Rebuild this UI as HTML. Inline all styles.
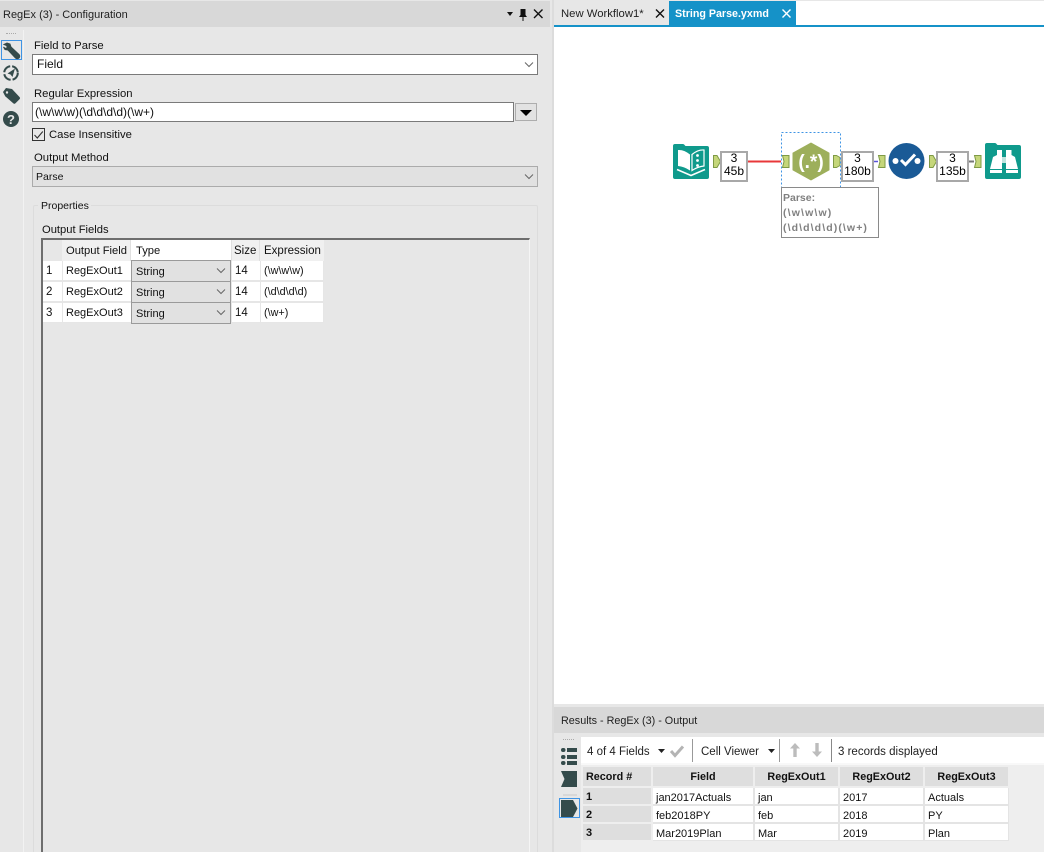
<!DOCTYPE html>
<html style="overflow:hidden;width:1044px;height:852px"><head><meta charset="utf-8">
<style>
html,body{margin:0;padding:0}
body{width:1044px;height:852px;overflow:hidden;position:relative;background:#e7e7e7;font-family:"Liberation Sans",sans-serif;font-size:11.3px;color:#111}
.a{position:absolute;box-sizing:border-box}
.t{position:absolute;white-space:nowrap;line-height:14px}
.b{font-weight:bold}
.c{text-align:center}
svg{position:absolute;overflow:visible}
.stat{position:absolute;box-sizing:border-box;background:#fff;border:2px solid #a8a8a8;text-align:center;font-size:12px;line-height:13px;color:#000}
.stat div{margin-top:-1px}
</style></head>
<body>
<!-- left panel -->
<div class="a" style="left:0;top:1px;width:550px;height:26px;background:#d8d8d8"></div>
<div class="t" style="left:3px;top:8px;font-size:11px;color:#222">RegEx (3) - Configuration</div>
<svg style="left:0;top:0" width="550" height="30"><path d="M507 12h6l-3 4z" fill="#111"/><path d="M520.500 9h5v6l1.500 2h-3.500v4h-1v-4h-3.500l1.500-2z" fill="#111"/><path d="M534 9.500l8.500 8.500M542.500 9.500l-8.500 8.500" stroke="#111" stroke-width="1.400" fill="none"/></svg>
<div class="a" style="left:23px;top:30px;width:1px;height:822px;background:#f2f2f2"></div>
<div class="a" style="left:6px;top:33px;width:10px;height:2px;border-top:1px dotted #aaa"></div>
<div class="a" style="left:1px;top:40px;width:21px;height:20px;border:1px solid #3f94e4"></div>
<svg style="left:0;top:0" width="24" height="130">
<path d="M4 44.500l3-1.500 3 1 1 3 8 7.500c1 1 1 2.500 0 3.500s-2.500 1-3.500 0l-7.500-8-3-.5-1.500-2.500 2 1.500 2-1-1-2z" fill="#344b4b" stroke="#344b4b" stroke-width="1"/>
<circle cx="11" cy="73" r="6.800" fill="none" stroke="#344b4b" stroke-width="2" stroke-dasharray="9 2"/><path d="M15 68.500l-2.500 8.500-2-2.500-3-1z" fill="#344b4b"/>
<path d="M3 92l3-4 6 1 7.500 8c.7.800.7 1.500 0 2.300l-4 4c-.8.700-1.500.7-2.300 0l-8-7z" fill="#344b4b"/><circle cx="7" cy="92.500" r="1.200" fill="#e7e7e7"/>
<circle cx="11" cy="119" r="8" fill="#344b4b"/>
<text x="11" y="124" text-anchor="middle" font-family="Liberation Sans" font-weight="bold" font-size="13" fill="#e7e7e7">?</text>
</svg>

<div class="t" style="left:34px;top:39px">Field to Parse</div>
<div class="a" style="left:32px;top:54px;width:506px;height:21px;background:#fff;border:1px solid #7a7a7a"></div>
<div class="t" style="left:37px;top:57px;font-size:12px">Field</div>

<div class="t" style="left:34px;top:87px">Regular Expression</div>
<div class="a" style="left:32px;top:102px;width:482px;height:20px;background:#fff;border:1px solid #7a7a7a"></div>
<div class="t" style="left:35px;top:105px;font-size:12px">(\w\w\w)(\d\d\d\d)(\w+)</div>
<div class="a" style="left:515px;top:103px;width:22px;height:18px;background:#e2e2e2;border:1px solid #adadad"></div>
<svg style="left:0;top:0" width="540" height="125"><path d="M520 110h12l-6 6z" fill="#000"/></svg>

<div class="a" style="left:32px;top:128px;width:13px;height:13px;background:#e7e7e7;border:1px solid #333"></div>
<svg style="left:0;top:0" width="50" height="145"><path d="M34.500 135l2.800 3 5.500-6.500" stroke="#333" stroke-width="1.100" fill="none"/></svg>
<div class="t" style="left:49px;top:128px">Case Insensitive</div>

<div class="t" style="left:34px;top:151px">Output Method</div>
<div class="a" style="left:32px;top:166px;width:506px;height:21px;background:#e1e1e1;border:1px solid #ababab"></div>
<div class="t" style="left:36px;top:170px;font-size:10.500px">Parse</div>
<svg style="left:0;top:0" width="540" height="190"><path d="M525 62.500l4 4 4-4M525 174.500l4 4 4-4" stroke="#666" fill="none"/></svg>

<!-- group -->
<div class="a" style="left:33px;top:205px;width:505px;height:647px;border:1px solid #dcdcdc;border-bottom:0;border-radius:2px 2px 0 0"></div>
<div class="a" style="left:38px;top:198px;width:53px;height:14px;background:#e7e7e7"></div>
<div class="t" style="left:41px;top:199px;font-size:10.500px">Properties</div>
<div class="t" style="left:42px;top:223px;font-size:11.200px">Output Fields</div>

<div class="a" style="left:41px;top:238px;width:489px;height:614px;border-top:2px solid #6e6e6e;border-left:2px solid #6e6e6e;border-right:1px solid #f5f5f5"></div>
<div class="a" style="left:43px;top:240px;width:19px;height:21px;background:#e7e7e7"></div>
<div class="a" style="left:62px;top:240px;width:262px;height:21px;background:#fff"></div>
<div class="a" style="left:62px;top:240px;width:69px;height:21px;background:#f0f0f0;border-right:1px solid #e0e0e0"></div>
<div class="t" style="left:66px;top:244px;font-size:11.200px">Output Field</div>
<div class="t" style="left:136px;top:244px;font-size:11.200px">Type</div>
<div class="a" style="left:231px;top:240px;width:29px;height:21px;background:#f0f0f0;border-left:1px solid #e0e0e0;border-right:1px solid #e0e0e0"></div>
<div class="t" style="left:234px;top:244px;font-size:11.500px">Size</div>
<div class="a" style="left:260px;top:240px;width:64px;height:21px;background:#f0f0f0"></div>
<div class="t" style="left:264px;top:244px;font-size:11.500px">Expression</div>

<!-- rows -->
<div class="a" style="left:43px;top:261px;width:19px;height:62px;background:#fff"></div>
<div class="a" style="left:62px;top:261px;width:262px;height:62px;background:#fff"></div>
<div class="a" style="left:43px;top:280px;width:281px;height:2px;background:#e6e6e6"></div>
<div class="a" style="left:43px;top:301px;width:281px;height:2px;background:#e6e6e6"></div>
<div class="a" style="left:43px;top:322px;width:281px;height:1px;background:#e6e6e6"></div>
<div class="a" style="left:62px;top:261px;width:1px;height:62px;background:#e6e6e6"></div>
<div class="a" style="left:231px;top:261px;width:1px;height:62px;background:#e6e6e6"></div>
<div class="a" style="left:260px;top:261px;width:1px;height:62px;background:#e6e6e6"></div>
<div class="a" style="left:323px;top:261px;width:1px;height:62px;background:#e6e6e6"></div>

<div class="a" style="left:131px;top:260px;width:100px;height:22px;background:#e1e1e1;border:1px solid #9a9a9a"></div>
<div class="a" style="left:131px;top:281px;width:100px;height:22px;background:#e1e1e1;border:1px solid #9a9a9a"></div>
<div class="a" style="left:131px;top:302px;width:100px;height:22px;background:#e1e1e1;border:1px solid #9a9a9a"></div>
<svg style="left:0;top:0" width="240" height="330"><path d="M217 268.500l4 4 4-4M217 289.500l4 4 4-4M217 310.500l4 4 4-4" stroke="#666" fill="none"/></svg>

<div class="t" style="left:46px;top:264px;font-size:11.500px">1</div>
<div class="t" style="left:46px;top:285px;font-size:11.500px">2</div>
<div class="t" style="left:46px;top:306px;font-size:11.500px">3</div>
<div class="t" style="left:66px;top:264px;font-size:11px">RegExOut1</div>
<div class="t" style="left:66px;top:285px;font-size:11px">RegExOut2</div>
<div class="t" style="left:66px;top:306px;font-size:11px">RegExOut3</div>
<div class="t" style="left:136px;top:265px;font-size:11px">String</div>
<div class="t" style="left:136px;top:286px;font-size:11px">String</div>
<div class="t" style="left:136px;top:307px;font-size:11px">String</div>
<div class="t" style="left:235px;top:264px;font-size:11.500px">14</div>
<div class="t" style="left:235px;top:285px;font-size:11.500px">14</div>
<div class="t" style="left:235px;top:306px;font-size:11.500px">14</div>
<div class="t" style="left:264px;top:264px;font-size:10.800px">(\w\w\w)</div>
<div class="t" style="left:264px;top:285px;font-size:10.800px">(\d\d\d\d)</div>
<div class="t" style="left:264px;top:306px;font-size:10.800px">(\w+)</div>

<!-- divider -->
<div class="a" style="left:552px;top:0;width:2px;height:852px;background:#dcdcdc"></div>

<!-- tabs -->
<div class="a" style="left:554px;top:1px;width:490px;height:24px;background:#fff"></div>
<div class="a" style="left:554px;top:1px;width:115px;height:24px;background:#e7e7e7"></div>
<div class="t" style="left:561px;top:7px;font-size:11.300px;color:#222">New Workflow1*</div>
<div class="a" style="left:669px;top:1px;width:127px;height:24px;background:#1592c8"></div>
<div class="t b" style="left:675px;top:7px;font-size:10.700px;color:#fff">String Parse.yxmd</div>
<svg style="left:0;top:0" width="800" height="30"><path d="M656 9.500l8 8M664 9.500l-8 8" stroke="#111" stroke-width="1.400" fill="none"/><path d="M782.500 9.500l8 8M790.500 9.500l-8 8" stroke="#fff" stroke-width="1.400" fill="none"/></svg>
<div class="a" style="left:554px;top:25px;width:490px;height:2px;background:#1592c8"></div>

<!-- canvas -->
<div class="a" style="left:554px;top:27px;width:490px;height:677px;background:#fff"></div>
<div class="a" style="left:554px;top:704px;width:490px;height:3px;background:#e7e7e7"></div>

<svg style="left:0;top:0" width="1044" height="260">
<!-- connectors -->
<path d="M748 161.500h33" stroke="#e8383a" stroke-width="2" fill="none"/>
<path d="M874 161.500h4" stroke="#5b55d8" stroke-width="1.500" fill="none"/>
<path d="M969 161.500h5" stroke="#777" stroke-width="2" fill="none"/>
<!-- input book -->
<path d="M673 146q0-2 2-2h8q1 0 2 1.500l.5.500h21.500q2 0 2 2v29q0 2-2 2h-32q-2 0-2-2z" fill="#0f9a8c"/>
<path d="M678 150q6-.5 12 4.500v16q-6-4-12-4.500z" fill="#fff"/>
<path d="M692 154.500q6-5 12-4.500v16q-6 .5-12 4.500z" fill="#0f9a8c" stroke="#fff" stroke-width="1.200"/>
<circle cx="697.500" cy="155.500" r="1.400" fill="#fff"/><circle cx="697.500" cy="160.500" r="1.400" fill="#fff"/><circle cx="697.500" cy="165.500" r="1.400" fill="#fff"/>
<path d="M677 169.500l14 6 14-6" fill="none" stroke="#fff" stroke-width="1.500"/>
<!-- anchors -->
<path d="M713.500 155.500h3.500l3.500 6-3.500 6h-3.500z" fill="#c5d67a" stroke="#7f9a45"/>
<path d="M782.500 155.500h6.500v12h-6.500l1.500-6z" fill="#c5d67a" stroke="#7f9a45"/>
<path d="M833.500 155.500h3l3.500 2v8l-3.500 2h-3z" fill="#c5d67a" stroke="#7f9a45"/>
<path d="M878.500 155.500h6.500v12h-6.500l1.500-6z" fill="#c5d67a" stroke="#7f9a45"/>
<path d="M929.500 155.500h3.500l3.500 6-3.500 6h-3.500z" fill="#c5d67a" stroke="#7f9a45"/>
<path d="M974.500 155.500h6.500v12h-6.500l1.500-6z" fill="#c5d67a" stroke="#7f9a45"/>
<!-- hex -->
<path d="M811 143l18 10v17l-18 10-18-10v-17z" fill="#9daf5b" stroke="#9daf5b" stroke-linejoin="round"/>
<text x="811" y="168" text-anchor="middle" font-family="Liberation Sans" font-weight="bold" font-size="19" fill="#fff">(.*)</text>
<!-- selection -->
<rect x="781.500" y="132.500" width="59" height="55" fill="none" stroke="#3f94e4" stroke-dasharray="2 2"/>
<!-- circle -->
<circle cx="906.500" cy="161" r="18" fill="#1a5a96"/>
<circle cx="895.500" cy="161" r="3" fill="#fff"/><circle cx="917.500" cy="161" r="3" fill="#fff"/>
<path d="M901 160l4.500 4.500 9.500-10" fill="none" stroke="#fff" stroke-width="3"/>
<!-- browse -->
<path d="M985 145q0-2 2-2h8q1 0 2 1.500l.5.500h21.500q2 0 2 2v30q0 2-2 2h-32q-2 0-2-2z" fill="#0f9a8c"/>
<path d="M997 150h5v23h-12v-4l3-12 4-2z" fill="#fff"/>
<path d="M1006 150h5.500v5l3.500 2 3 12v4h-12z" fill="#fff"/>
<rect x="1002" y="157" width="4" height="6" fill="#bfe3de"/>
<path d="M989.500 169.500h13M1005.500 169.500h13" stroke="#0f9a8c" stroke-width="1"/>
</svg>

<div class="stat" style="left:720px;top:151px;width:28px;height:31px"><div>3<br>45b</div></div>
<div class="stat" style="left:841px;top:151px;width:33px;height:31px"><div>3<br>180b</div></div>
<div class="stat" style="left:936px;top:151px;width:33px;height:31px"><div>3<br>135b</div></div>

<div class="a" style="left:781px;top:187px;width:98px;height:51px;background:#fff;border:1px solid #8a8a8a"></div>
<div class="t b" style="left:783px;top:191px;font-size:10.500px;line-height:15px;color:#808080">Parse:<br><span style="letter-spacing:1.150px">(\w\w\w)</span><br><span style="letter-spacing:1.100px">(\d\d\d\d)(\w+)</span></div>

<!-- results -->
<div class="a" style="left:554px;top:707px;width:490px;height:26px;background:#d8d8d8"></div>
<div class="t" style="left:561px;top:714px;font-size:10.800px;color:#222">Results - RegEx (3) - Output</div>
<div class="a" style="left:554px;top:733px;width:490px;height:119px;background:#e7e7e7"></div>
<div class="a" style="left:581px;top:737px;width:463px;height:115px;background:#eeeeee"></div>
<div class="a" style="left:581px;top:737px;width:463px;height:26px;background:#fff"></div>
<div class="a" style="left:581px;top:763px;width:463px;height:2px;background:#f8f8f8"></div>
<div class="a" style="left:563px;top:739px;width:11px;height:2px;border-top:1px dotted #aaa"></div>

<svg style="left:0;top:0" width="1044" height="852">
<rect x="561" y="748" width="4.500" height="4" rx="2" fill="#344b4b"/><rect x="567" y="748" width="10" height="4" fill="#344b4b"/>
<rect x="561" y="755" width="4.500" height="4" rx="2" fill="#344b4b"/><rect x="567" y="755" width="10" height="4" fill="#344b4b"/>
<rect x="561" y="761" width="4.500" height="4" rx="2" fill="#344b4b"/><rect x="567" y="761" width="10" height="4" fill="#344b4b"/>
<path d="M561 771h16v16h-16l3.500-8z" fill="#344b4b"/>
<rect x="563" y="794.500" width="14" height="1" fill="#c8c8c8"/>
<rect x="559.500" y="798.500" width="20" height="19" fill="none" stroke="#3f94e4"/>
<path d="M561 800h12l4.500 8.500-4.500 8.500h-12z" fill="#344b4b"/>
<path d="M658 749h7l-3.500 4z" fill="#222"/>
<path d="M671 751l4 4.500 8-9" fill="none" stroke="#b4b4b4" stroke-width="3"/>
<rect x="692" y="739" width="1" height="23" fill="#999"/>
<path d="M768 749h7l-3.500 4z" fill="#222"/>
<rect x="779" y="739" width="1" height="23" fill="#999"/>
<path d="M795 743l-5 5.500h3.300v8.500h3.400v-8.500h3.300z" fill="#bcbcbc"/>
<path d="M817 757l-5-5.500h3.300v-8.500h3.400v8.500h3.300z" fill="#bcbcbc"/>
<rect x="831" y="739" width="1" height="23" fill="#888"/>
</svg>
<div class="t" style="left:587px;top:745px;font-size:11.500px;color:#222">4 of 4 Fields</div>
<div class="t" style="left:701px;top:745px;font-size:11.500px;color:#222">Cell Viewer</div>
<div class="t" style="left:838px;top:745px;font-size:11.500px;color:#222">3 records displayed</div>

<!-- result grid headers -->
<div class="a" style="left:583px;top:767px;width:68px;height:19px;background:#dedede"></div>
<div class="a" style="left:653px;top:767px;width:100px;height:19px;background:#dedede"></div>
<div class="a" style="left:755px;top:767px;width:83px;height:19px;background:#dedede"></div>
<div class="a" style="left:840px;top:767px;width:83px;height:19px;background:#dedede"></div>
<div class="a" style="left:925px;top:767px;width:83px;height:19px;background:#dedede"></div>
<div class="t b" style="left:586px;top:770px;font-size:10.800px">Record #</div>
<div class="t b c" style="left:653px;top:770px;width:100px;font-size:10.800px">Field</div>
<div class="t b c" style="left:755px;top:770px;width:83px;font-size:10.800px">RegExOut1</div>
<div class="t b c" style="left:840px;top:770px;width:83px;font-size:10.800px">RegExOut2</div>
<div class="t b c" style="left:925px;top:770px;width:83px;font-size:10.800px">RegExOut3</div>

<!-- result rows -->
<div class="a" style="left:583px;top:788px;width:68px;height:16px;background:#dedede"></div>
<div class="a" style="left:583px;top:806px;width:68px;height:16px;background:#dedede"></div>
<div class="a" style="left:583px;top:824px;width:68px;height:16px;background:#dedede"></div>
<div class="a" style="left:653px;top:788px;width:355px;height:52px;background:#fff"></div>
<div class="a" style="left:653px;top:804px;width:356px;height:2px;background:#e4e4e4"></div>
<div class="a" style="left:653px;top:822px;width:356px;height:2px;background:#e4e4e4"></div>
<div class="a" style="left:653px;top:840px;width:356px;height:1px;background:#e4e4e4"></div>
<div class="a" style="left:753px;top:788px;width:2px;height:53px;background:#e4e4e4"></div>
<div class="a" style="left:838px;top:788px;width:2px;height:53px;background:#e4e4e4"></div>
<div class="a" style="left:923px;top:788px;width:2px;height:53px;background:#e4e4e4"></div>
<div class="a" style="left:1008px;top:788px;width:1px;height:53px;background:#e4e4e4"></div>

<div class="t b" style="left:586px;top:790px;font-size:11px">1</div>
<div class="t b" style="left:586px;top:808px;font-size:11px">2</div>
<div class="t b" style="left:586px;top:826px;font-size:11px">3</div>
<div class="t" style="left:656px;top:791px;font-size:11px">jan2017Actuals</div>
<div class="t" style="left:656px;top:809px;font-size:11px">feb2018PY</div>
<div class="t" style="left:656px;top:827px;font-size:11px">Mar2019Plan</div>
<div class="t" style="left:758px;top:791px;font-size:11px">jan</div>
<div class="t" style="left:758px;top:809px;font-size:11px">feb</div>
<div class="t" style="left:758px;top:827px;font-size:11px">Mar</div>
<div class="t" style="left:843px;top:791px;font-size:11px">2017</div>
<div class="t" style="left:843px;top:809px;font-size:11px">2018</div>
<div class="t" style="left:843px;top:827px;font-size:11px">2019</div>
<div class="t" style="left:928px;top:791px;font-size:11px">Actuals</div>
<div class="t" style="left:928px;top:809px;font-size:11px">PY</div>
<div class="t" style="left:928px;top:827px;font-size:11px">Plan</div>
</body></html>
